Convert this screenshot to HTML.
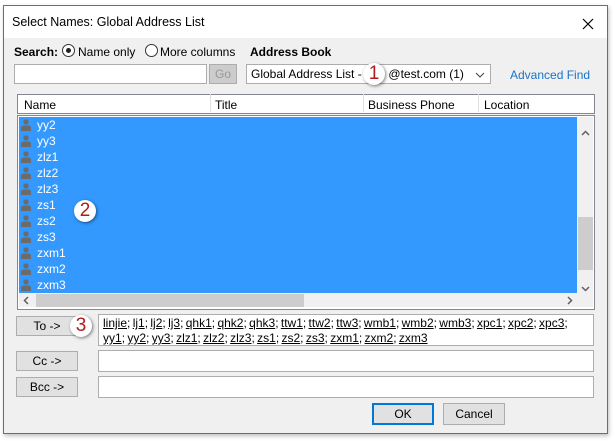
<!DOCTYPE html>
<html><head><style>
body{margin:0;width:615px;height:441px;background:#fff;font-family:"Liberation Sans",sans-serif;font-size:12px;color:#000;position:relative;overflow:hidden}
.a{position:absolute}
.dlg{left:3px;top:5px;width:603px;height:427px;border:1px solid #2b7bd0;background:#f0f0f0;box-shadow:1px 2px 4px rgba(0,0,0,.25)}
.tb{left:0;top:0;width:603px;height:32px;background:#fff}
.box{background:#fff;border:1px solid #adadad}
.btn{background:#e1e1e1;border:1px solid #adadad;text-align:center;box-sizing:border-box}
.row{left:21px;height:16px;line-height:16px;color:#fff}
.ic{display:inline-block;width:10px;height:12px;vertical-align:-2px;margin-right:6px}
.badge{width:22px;height:22px;border-radius:50%;background:#fff;box-shadow:1px 1px 3px rgba(0,0,0,.5);color:#b01c1c;font-size:19px;text-align:center;line-height:22px}
u{color:#000}
</style></head><body>
<div class="a dlg">
<div class="a tb"></div>
<div class="a" style="left:8px;top:9px;font-size:12.5px;color:#000">Select Names: Global Address List</div>
<svg class="a" style="left:578px;top:12px" width="12" height="12"><path d="M1 1L11 11M11 1L1 11" stroke="#000" stroke-width="1.2"/></svg>
<div class="a" style="left:10px;top:39px;font-weight:bold">Search:</div>
<div class="a" style="left:58px;top:38px;width:11px;height:11px;border:1px solid #333;border-radius:50%;background:#fff"><div class="a" style="left:3px;top:3px;width:5px;height:5px;border-radius:50%;background:#222"></div></div>
<div class="a" style="left:74px;top:39px">Name only</div>
<div class="a" style="left:141px;top:38px;width:11px;height:11px;border:1px solid #333;border-radius:50%;background:#fff"></div>
<div class="a" style="left:156px;top:39px">More columns</div>
<div class="a" style="left:246px;top:39px;font-weight:bold">Address Book</div>
<div class="a box" style="left:10px;top:58px;width:191px;height:18px"></div>
<div class="a btn" style="left:205px;top:58px;width:28px;height:20px;line-height:18px;color:#999;background:#ccc">Go</div>
<div class="a box" style="left:242px;top:58px;width:245px;height:20px;line-height:18px;padding-left:4px;box-sizing:border-box">Global Address List - &nbsp;&nbsp;&nbsp;&nbsp;&nbsp;&nbsp;&nbsp;@test.com (1)</div>
<svg class="a" style="left:471px;top:66px" width="10" height="6"><path d="M1 1L5 5L9 1" stroke="#444" fill="none"/></svg>
<div class="a badge" style="left:359px;top:57px">1</div>
<div class="a" style="left:506px;top:62px;color:#1a73c7">Advanced Find</div>
<div class="a box" style="left:13px;top:88px;width:576px;height:18px;border-color:#828790"></div>
<div class="a" style="left:20px;top:92px">Name</div>
<div class="a" style="left:206px;top:88px;width:1px;height:18px;background:#e0e0e0"></div>
<div class="a" style="left:211px;top:92px">Title</div>
<div class="a" style="left:359px;top:88px;width:1px;height:18px;background:#e0e0e0"></div>
<div class="a" style="left:364px;top:92px">Business Phone</div>
<div class="a" style="left:474px;top:88px;width:1px;height:18px;background:#e0e0e0"></div>
<div class="a" style="left:480px;top:92px">Location</div>
<div class="a box" style="left:13px;top:109px;width:576px;height:193px;border-color:#828790"></div>
<div class="a" style="left:15px;top:111px;width:558px;height:176px;background:#3399ff"></div>
<div class="a" style="left:573px;top:111px;width:16px;height:176px;background:#f0f0f0"></div>
<div class="a" style="left:574px;top:211px;width:15px;height:53px;background:#cdcdcd"></div>
<svg class="a" style="left:577px;top:124px" width="9" height="6"><path d="M1 5L4.5 1.5L8 5" stroke="#606060" stroke-width="1.5" fill="none"/></svg>
<svg class="a" style="left:577px;top:280px" width="9" height="6"><path d="M1 1L4.5 4.5L8 1" stroke="#606060" stroke-width="1.5" fill="none"/></svg>
<div class="a" style="left:15px;top:287px;width:574px;height:14px;background:#f0f0f0"></div>
<div class="a" style="left:32px;top:288px;width:268px;height:13px;background:#cdcdcd"></div>
<svg class="a" style="left:19px;top:290px" width="6" height="9"><path d="M5 1L1.5 4.5L5 8" stroke="#606060" stroke-width="1.5" fill="none"/></svg>
<svg class="a" style="left:563px;top:290px" width="6" height="9"><path d="M1 1L4.5 4.5L1 8" stroke="#606060" stroke-width="1.5" fill="none"/></svg>
<div class="a badge" style="left:70px;top:194px">2</div>
<div class="a btn" style="left:12px;top:310px;width:62px;height:20px;line-height:18px">To -&gt;</div>
<div class="a badge" style="left:66px;top:309px">3</div>
<div class="a box" style="left:94px;top:308px;width:496px;height:32px;border-color:#adadad;line-height:15px;padding:1px 0 0 4px;box-sizing:border-box;font-size:12px;word-spacing:-1px;white-space:nowrap;overflow:hidden"><u>linjie</u>; <u>lj1</u>; <u>lj2</u>; <u>lj3</u>; <u>qhk1</u>; <u>qhk2</u>; <u>qhk3</u>; <u>ttw1</u>; <u>ttw2</u>; <u>ttw3</u>; <u>wmb1</u>; <u>wmb2</u>; <u>wmb3</u>; <u>xpc1</u>; <u>xpc2</u>; <u>xpc3</u>;<br><u>yy1</u>; <u>yy2</u>; <u>yy3</u>; <u>zlz1</u>; <u>zlz2</u>; <u>zlz3</u>; <u>zs1</u>; <u>zs2</u>; <u>zs3</u>; <u>zxm1</u>; <u>zxm2</u>; <u>zxm3</u></div>
<div class="a btn" style="left:12px;top:345px;width:62px;height:20px;line-height:18px">Cc -&gt;</div>
<div class="a box" style="left:94px;top:344px;width:494px;height:20px"></div>
<div class="a btn" style="left:12px;top:371px;width:62px;height:20px;line-height:18px">Bcc -&gt;</div>
<div class="a box" style="left:94px;top:370px;width:494px;height:20px"></div>
<div class="a btn" style="left:368px;top:397px;width:62px;height:22px;line-height:18px;border:2px solid #0078d7">OK</div>
<div class="a btn" style="left:439px;top:397px;width:62px;height:22px;line-height:20px">Cancel</div>
</div>
<div id="rows"></div>
<script>
var n=["yy2","yy3","zlz1","zlz2","zlz3","zs1","zs2","zs3","zxm1","zxm2","zxm3"],h="";
n.forEach(function(t,i){h+='<div class="a row" style="top:'+(117+i*16)+'px"><svg class="ic" viewBox="0 0 10 12"><circle cx="5" cy="3" r="2.7" fill="#6b6b6b"/><path d="M0 12V9Q0 6.5 3 6.5H7Q10 6.5 10 9V12Z" fill="#6b6b6b"/></svg>'+t+'</div>';});
document.getElementById("rows").innerHTML=h;
</script>
</body></html>
